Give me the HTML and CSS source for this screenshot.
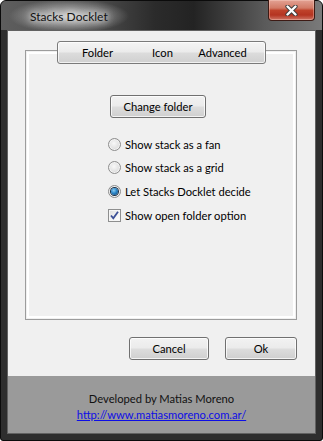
FILE: index.html
```html
<!DOCTYPE html>
<html lang="en">
<head>
  <meta charset="UTF-8">
  <title>Stacks Docklet</title>
  <link rel="stylesheet" href="styles.css">
</head>
<body>
  <div class="window">
    <div class="titlebar">
      <span class="title">Stacks Docklet</span>
      <div class="close-btn">
        <svg width="13" height="11" viewBox="0 0 13 11">
          <path d="M2.5 1.5 L10.5 9.5 M10.5 1.5 L2.5 9.5" stroke="#3a3a3a" stroke-width="4.2" stroke-linecap="round"/>
          <path d="M2.5 1.5 L10.5 9.5 M10.5 1.5 L2.5 9.5" stroke="#ffffff" stroke-width="2.4" stroke-linecap="round"/>
        </svg>
      </div>
    </div>
    <div class="client">
      <div class="content">
        <div class="panel">
          <div class="tabs">
            <span>Folder</span>
            <span>Icon</span>
            <span>Advanced</span>
          </div>
          <button class="btn change-btn">Change folder</button>
          <ul class="options">
            <li class="row"><span class="radio"></span>Show stack as a fan</li>
            <li class="row"><span class="radio"></span>Show stack as a grid</li>
            <li class="row tall"><span class="radio checked"></span>Let Stacks Docklet decide</li>
            <li class="row short">
              <span class="checkbox">
                <svg width="11" height="11" viewBox="0 0 11 11">
                  <path d="M2 5.5 L4.3 8.3 L9 1.8" fill="none" stroke="#3b4f96" stroke-width="1.8"/>
                </svg>
              </span>Show open folder option
            </li>
          </ul>
        </div>
        <div class="actions">
          <button class="btn cancel-btn">Cancel</button>
          <button class="btn ok-btn">Ok</button>
        </div>
      </div>
      <div class="footer">
        <p>Developed by Matias Moreno</p>
        <a href="#">http://www.matiasmoreno.com.ar/</a>
      </div>
    </div>
  </div>
</body>
</html>
```

FILE: styles.css
```css
/* Win7 style dialog */
body {
  margin: 0;
  padding: 0;
  background: #ffffff;
  font-family: Lato, "Liberation Sans", sans-serif;
  font-size: 11.2px;
  color: #000000;
}

.window {
  width: 307px;
  height: 432px;
  padding: 0 7px 7px;
  border: 1px solid #0b0b0b;
  border-radius: 6px 6px 3px 3px;
  background: #2e2e2e;
}

.titlebar {
  display: flex;
  justify-content: space-between;
  align-items: flex-start;
  height: 29px;
  margin: 0 -7px;
  padding: 0 7px 0 29px;
  border-radius: 5px 5px 0 0;
  background:
    radial-gradient(ellipse 60px 17px at 68px 15px, rgba(215, 215, 215, 0.9), rgba(215, 215, 215, 0) 100%),
    linear-gradient(90deg, #5e5e5e 0%, #4c4c4c 30%, #2b2b2b 48%, #232323 60%, #5a5a5a 82%, #7a7a7a 100%);
}

.title {
  margin-top: 8px;
  font-size: 12px;
  color: #111111;
  text-shadow: 0 0 6px #ffffff, 0 0 10px #e0e0e0;
}

.close-btn {
  display: flex;
  justify-content: center;
  align-items: center;
  width: 45px;
  height: 20px;
  margin-top: -1px;
  border: 1px solid #3d1a14;
  border-top: none;
  border-radius: 0 0 4px 4px;
  background: linear-gradient(#e3a294 0%, #d27a66 40%, #bf422b 52%, #b43421 75%, #cf7565 100%);
  box-shadow: inset 0 0 0 1px rgba(255, 220, 210, 0.35);
}

.client {
  height: 402px;
  margin-top: 1px;
  box-shadow: 0 0 0 1px #626262;
}

.content {
  display: flex;
  flex-direction: column;
  height: 345px;
  background: #f0f0f0;
}

.panel {
  height: 268px;
  margin: 19px 18px 0 17px;
  border: 1px solid #9c9c9c;
  box-shadow: inset 0 0 0 1px #f0f0f0, inset 0 0 0 3px #ffffff;
}

.tabs {
  display: grid;
  grid-template-columns: 66px 64px 56px;
  align-items: center;
  box-sizing: border-box;
  width: 209px;
  height: 23px;
  margin: -10px auto 0;
  padding-left: 7px;
  border: 1px solid #7a7a7a;
  border-radius: 3px;
  background: linear-gradient(#f4f4f4 0%, #ebebeb 48%, #dcdcdc 52%, #d0d0d0 100%);
  box-shadow: inset 0 0 0 1px rgba(255, 255, 255, 0.7);
  text-align: center;
}

.btn {
  height: 23px;
  padding: 0;
  border: 1px solid #707070;
  border-radius: 3px;
  background: linear-gradient(#f2f2f2 0%, #ebebeb 48%, #dddddd 52%, #cfcfcf 100%);
  box-shadow: inset 0 0 0 1px rgba(255, 255, 255, 0.75);
  font-family: inherit;
  font-size: inherit;
  color: #000000;
}

.change-btn {
  display: block;
  width: 96px;
  margin: 31px 0 0 84px;
}

.options {
  margin: 15px 0 0 82px;
  padding: 0;
  list-style: none;
}

.row {
  display: flex;
  align-items: center;
  gap: 4px;
  height: 23px;
}

.row.tall {
  height: 25px;
}

.row.short {
  height: 22px;
}

.radio {
  display: flex;
  justify-content: center;
  align-items: center;
  width: 11px;
  height: 11px;
  border: 1px solid #8d8d8d;
  border-radius: 50%;
  background: radial-gradient(circle at 45% 40%, #f8f8f8 0%, #e2e2e2 55%, #c9c9c9 100%);
  box-shadow: inset 0 0 0 1px #f4f4f4;
}

.radio.checked::after {
  content: "";
  width: 7px;
  height: 7px;
  border-radius: 50%;
  background: radial-gradient(circle at 40% 35%, #8fd0f6 0%, #2a86c8 45%, #123f6e 100%);
  box-shadow: 0 0 0 1px #1c2f44;
}

.checkbox {
  display: flex;
  justify-content: center;
  align-items: center;
  width: 11px;
  height: 11px;
  border: 1px solid #8e8f8f;
  background: linear-gradient(135deg, #dcdcdc 0%, #f4f4f4 60%, #ffffff 100%);
  box-shadow: inset 0 0 0 1px #f6f6f6;
}

.actions {
  display: flex;
  justify-content: flex-end;
  gap: 16px;
  margin: 17px 18px 0 0;
}

.cancel-btn {
  width: 80px;
}

.ok-btn {
  width: 72px;
}

.footer {
  height: 57px;
  padding-top: 15px;
  box-sizing: border-box;
  background: #9a9a9a;
  text-align: center;
  line-height: 16px;
}

.footer p {
  margin: 0;
  color: #111111;
}

.footer a {
  color: #0d0de6;
  text-decoration: underline;
}
```
